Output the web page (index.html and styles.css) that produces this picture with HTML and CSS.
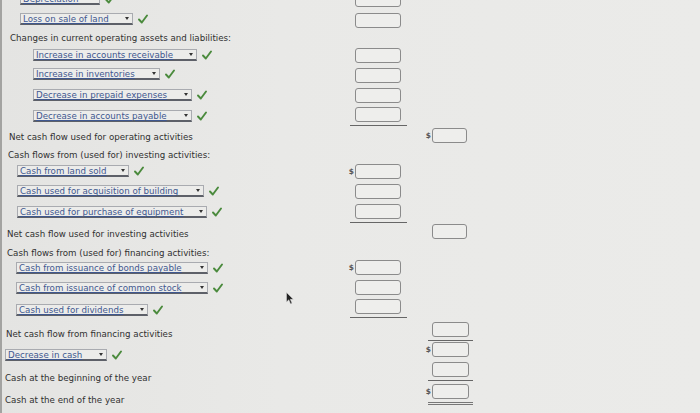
FILE: index.html
```html
<!DOCTYPE html>
<html>
<head>
<meta charset="utf-8">
<link rel="stylesheet" href="styles.css">
</head>
<body>
<div class="sheet">
  <div class="left">
    <div class="row in-a"><span class="sel w80">Depreciation<i class="arr"></i></span><svg class="chk" viewBox="0 0 10 10"><path d="M1 5.5 L3.8 8.5 L9 1.5"/></svg></div>
    <div class="row in-a"><span class="sel w113">Loss on sale of land<i class="arr"></i></span><svg class="chk" viewBox="0 0 10 10"><path d="M1 5.5 L3.8 8.5 L9 1.5"/></svg></div>
    <div class="row lbl in-l1">Changes in current operating assets and liabilities:</div>
    <div class="row in-b"><span class="sel w164">Increase in accounts receivable<i class="arr"></i></span><svg class="chk" viewBox="0 0 10 10"><path d="M1 5.5 L3.8 8.5 L9 1.5"/></svg></div>
    <div class="row in-b"><span class="sel w127">Increase in inventories<i class="arr"></i></span><svg class="chk" viewBox="0 0 10 10"><path d="M1 5.5 L3.8 8.5 L9 1.5"/></svg></div>
    <div class="row in-b"><span class="sel w159">Decrease in prepaid expenses<i class="arr"></i></span><svg class="chk" viewBox="0 0 10 10"><path d="M1 5.5 L3.8 8.5 L9 1.5"/></svg></div>
    <div class="row in-b"><span class="sel w159">Decrease in accounts payable<i class="arr"></i></span><svg class="chk" viewBox="0 0 10 10"><path d="M1 5.5 L3.8 8.5 L9 1.5"/></svg></div>
    <div class="row lbl in-l2">Net cash flow used for operating activities</div>
    <div class="row lbl in-l3">Cash flows from (used for) investing activities:</div>
    <div class="row in-c"><span class="sel w112">Cash from land sold<i class="arr"></i></span><svg class="chk" viewBox="0 0 10 10"><path d="M1 5.5 L3.8 8.5 L9 1.5"/></svg></div>
    <div class="row in-c"><span class="sel w187">Cash used for acquisition of building<i class="arr"></i></span><svg class="chk" viewBox="0 0 10 10"><path d="M1 5.5 L3.8 8.5 L9 1.5"/></svg></div>
    <div class="row in-c"><span class="sel w190">Cash used for purchase of equipment<i class="arr"></i></span><svg class="chk" viewBox="0 0 10 10"><path d="M1 5.5 L3.8 8.5 L9 1.5"/></svg></div>
    <div class="row lbl in-l4">Net cash flow used for investing activities</div>
    <div class="row lbl in-l4">Cash flows from (used for) financing activities:</div>
    <div class="row in-d"><span class="sel w192">Cash from issuance of bonds payable<i class="arr"></i></span><svg class="chk" viewBox="0 0 10 10"><path d="M1 5.5 L3.8 8.5 L9 1.5"/></svg></div>
    <div class="row in-d"><span class="sel w192">Cash from issuance of common stock<i class="arr"></i></span><svg class="chk" viewBox="0 0 10 10"><path d="M1 5.5 L3.8 8.5 L9 1.5"/></svg></div>
    <div class="row in-d"><span class="sel w132">Cash used for dividends<i class="arr"></i></span><svg class="chk" viewBox="0 0 10 10"><path d="M1 5.5 L3.8 8.5 L9 1.5"/></svg></div>
    <div class="row lbl in-l5">Net cash flow from financing activities</div>
    <div class="row in-e"><span class="sel w102">Decrease in cash<i class="arr"></i></span><svg class="chk" viewBox="0 0 10 10"><path d="M1 5.5 L3.8 8.5 L9 1.5"/></svg></div>
    <div class="row lbl in-l6">Cash at the beginning of the year</div>
    <div class="row lbl in-l6">Cash at the end of the year</div>
  </div>

  <div class="col1">
    <div class="cell c1-top"><span class="dol"></span><span class="box b1"></span></div>
    <div class="cell g6"><span class="dol"></span><span class="box b1"></span></div>
    <div class="cell g20"><span class="dol"></span><span class="box b1"></span></div>
    <div class="cell g5"><span class="dol"></span><span class="box b1"></span></div>
    <div class="cell g5"><span class="dol"></span><span class="box b1"></span></div>
    <div class="cell g4"><span class="dol"></span><span class="box b1"></span></div>
    <div class="rule r1"></div>
    <div class="cell g38"><span class="dol">$</span><span class="box b1"></span></div>
    <div class="cell g5"><span class="dol"></span><span class="box b1"></span></div>
    <div class="cell g5"><span class="dol"></span><span class="box b1"></span></div>
    <div class="rule r1"></div>
    <div class="cell g37"><span class="dol">$</span><span class="box b1"></span></div>
    <div class="cell g5"><span class="dol"></span><span class="box b1"></span></div>
    <div class="cell g4"><span class="dol"></span><span class="box b1"></span></div>
    <div class="rule r1"></div>
  </div>

  <div class="col2">
    <div class="cell c2-top"><span class="dol">$</span><span class="box b2"></span></div>
    <div class="cell g81"><span class="dol"></span><span class="box b2"></span></div>
    <div class="cell g83"><span class="dol"></span><span class="box b3"></span></div>
    <div class="rule r2"></div>
    <div class="cell g1"><span class="dol">$</span><span class="box b3"></span></div>
    <div class="cell g5"><span class="dol"></span><span class="box b3"></span></div>
    <div class="rule r2"></div>
    <div class="cell g3"><span class="dol">$</span><span class="box b3"></span></div>
    <div class="rule r2 dbl"></div>
  </div>
</div>
<svg class="cursor" viewBox="0 0 8 13"><path d="M0.5 0.5 L0.5 10 L2.8 7.8 L4.6 12 L6 11.3 L4.3 7.3 L7.3 7.3 Z"/></svg>
</body>
</html>
```

FILE: styles.css
```css
html, body {
  margin: 0;
  padding: 0;
}
body {
  width: 700px;
  height: 413px;
  overflow: hidden;
  position: relative;
  background: linear-gradient(90deg, #e4e4e2 0%, #e9e9e7 40%, #ebebe9 100%);
  border-left: 2px solid #a3a3a1;
  box-sizing: border-box;
  font-family: "DejaVu Sans", Verdana, sans-serif;
  font-size: 8.7px;
  color: #333;
}
.sheet {
  display: flex;
  align-items: flex-start;
}
.left {
  width: 343px;
  margin-top: -8px;
  display: grid;
  grid-template-rows: 20px 19px 17px 19px 21px 21px 21px 18px 16px 20px 21px 22px 19px 15px 20px 22px 24px 21px 23px 22px 14px;
}
.row {
  display: flex;
  align-items: center;
  height: 14px;
  white-space: nowrap;
}
.lbl { color: #303030; }
.in-a { padding-left: 18px; }
.in-b { padding-left: 31px; }
.in-c { padding-left: 15px; }
.in-d { padding-left: 14px; }
.in-e { padding-left: 3px; }
.in-l1 { padding-left: 8px; }
.in-l2 { padding-left: 7px; }
.in-l3 { padding-left: 6px; }
.in-l4 { padding-left: 5px; }
.in-l5 { padding-left: 4px; }
.in-l6 { padding-left: 3px; }

.sel {
  box-sizing: border-box;
  height: 12px;
  display: flex;
  align-items: center;
  justify-content: space-between;
  padding: 0 3px 0 2px;
  background: #ececea;
  border: 1px solid #a9abb0;
  border-bottom: 2px solid #5d6068;
  color: #3f5890;
  text-decoration: underline;
  text-decoration-color: #3f5890;
  text-underline-offset: 1px;
}
.arr {
  width: 0;
  height: 0;
  border-left: 2.5px solid transparent;
  border-right: 2.5px solid transparent;
  border-top: 3px solid #333;
}
.w80 { width: 80px; }
.w102 { width: 102px; }
.w112 { width: 112px; }
.w113 { width: 113px; }
.w127 { width: 127px; }
.w132 { width: 132px; }
.w159 { width: 159px; }
.w164 { width: 164px; }
.w187 { width: 187px; }
.w190 { width: 190px; }
.w192 { width: 192px; }

.chk {
  width: 10px;
  height: 10px;
  margin-left: 5px;
  fill: none;
  stroke: #4a8a3c;
  stroke-width: 1.9;
  stroke-linecap: round;
  stroke-linejoin: round;
}

.col1 {
  width: 75px;
  display: flex;
  flex-direction: column;
}
.col2 {
  width: 70px;
  display: flex;
  flex-direction: column;
  margin-top: 128px;
}
.cell {
  display: flex;
  align-items: center;
}
.col1 .dol { width: 10px; }
.col2 .dol { width: 12px; }
.dol {
  font-size: 7.5px;
  font-weight: bold;
  color: #555;
  text-align: right;
  padding-right: 1px;
  box-sizing: border-box;
}
.box {
  box-sizing: border-box;
  height: 15px;
  border: 1.5px solid #8b8b8b;
  border-radius: 3px;
  background: #eeeeec;
}
.b1 { width: 46px; }
.b2 { width: 35px; }
.b3 { width: 37px; }
.c1-top { margin-top: -8px; }
.g1 { margin-top: 1px; }
.g3 { margin-top: 3px; }
.g4 { margin-top: 4px; }
.g5 { margin-top: 5px; }
.g6 { margin-top: 6px; }
.g20 { margin-top: 20px; }
.g37 { margin-top: 37px; }
.g38 { margin-top: 38px; }
.g81 { margin-top: 81px; }
.g83 { margin-top: 83px; }
.rule {
  height: 0;
  border-top: 1.5px solid #666;
  margin-top: 3px;
}
.r1 { margin-left: 5px; width: 57px; }
.r2 { margin-left: 8px; width: 45px; }
.dbl {
  border-top: 3px double #777;
  height: 0;
}
.cursor {
  position: absolute;
  left: 284px;
  top: 292px;
  width: 8px;
  height: 13px;
  fill: #222;
  stroke: #ddd;
  stroke-width: 0.5;
}
```
